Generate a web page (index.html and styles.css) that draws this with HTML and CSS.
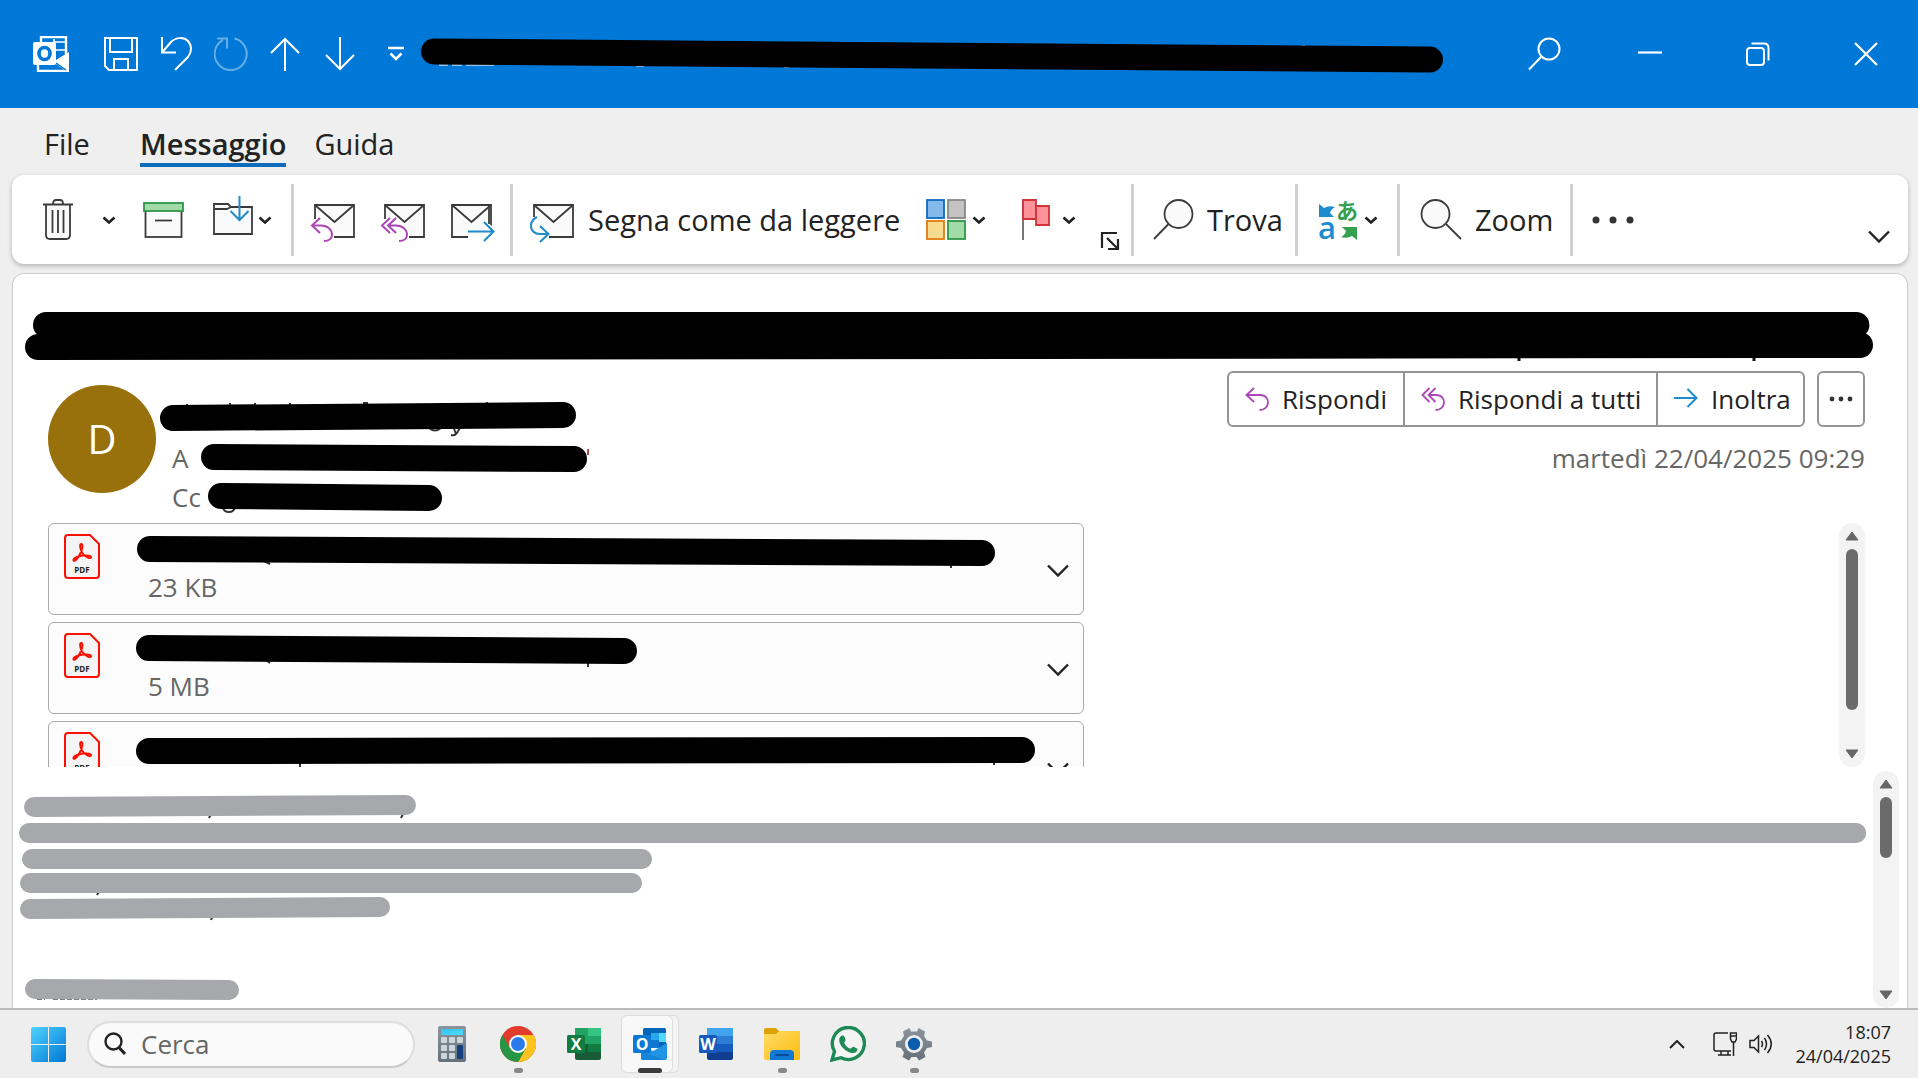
FILE: index.html
```html
<!DOCTYPE html>
<html lang="it">
<head>
<meta charset="utf-8">
<title>Messaggio</title>
<link rel="stylesheet" href="styles.css">
</head>
<body>
<svg class="defs" width="0" height="0" aria-hidden="true">
  <defs>
    <symbol id="chev" viewBox="0 0 14 8"><path d="M1.500 1.500 7 6.500 12.500 1.500" fill="none" stroke="#222" stroke-width="2.600"/></symbol>
    <symbol id="chev-lg" viewBox="0 0 22 13"><path d="M1 1.500 11 11.500 21 1.500" fill="none" stroke="#222" stroke-width="2.400"/></symbol>
    <symbol id="envelope" viewBox="0 0 41 34"><path d="M1 1H40V33H1Z" fill="#fafafa" stroke="#3b3b3b" stroke-width="1.800"/><path d="M1 1 20.500 18 40 1" fill="none" stroke="#3b3b3b" stroke-width="1.800"/></symbol>
    <symbol id="reply" viewBox="0 0 24 24"><path d="M9 1 1.500 8 9 15M1.500 8H15C21 8 23 12 23 15.500 23 20 19.500 23 14.500 23" fill="none" stroke="#ab47b5" stroke-width="1.800"/></symbol>
    <symbol id="reply-all" viewBox="0 0 24 24"><path d="M8.500 1 1.500 8 8.500 15M14.500 1 7.500 8 14.500 15M7.500 8H15C21 8 23 12 23 15.500 23 20 19.500 23 14.500 23" fill="none" stroke="#ab47b5" stroke-width="1.800"/></symbol>
    <symbol id="pdf" viewBox="0 0 36 45">
      <path d="M4 1H26L35 10V41Q35 44 32 44H4Q1 44 1 41V4Q1 1 4 1Z" fill="#f4f4f4" stroke="#fa0f00" stroke-width="2"/>
      <path d="M17 10C19.500 10 18.500 15 16.500 19 14.500 23.500 11 28 9.500 26.500 8.500 24.500 14 22 19 21.500 24 21 27.500 22 27 23.500 26 25.500 20.500 22.500 18 18.500 16 15 15.500 10 17 10Z" fill="none" stroke="#fa0f00" stroke-width="1.900"/>
      <text x="18" y="39" text-anchor="middle" font-size="8" font-weight="700" fill="#222">PDF</text>
    </symbol>
    <linearGradient id="g-win" x2="1" y2="1"><stop stop-color="#4fd3ff"/><stop offset="1" stop-color="#0078d4"/></linearGradient>
    <linearGradient id="g-folder" x2="1" y2="1"><stop stop-color="#ffdb66"/><stop offset="1" stop-color="#fcbc10"/></linearGradient>
    <linearGradient id="g-grey" x2="0" y2="1"><stop stop-color="#8b949b"/><stop offset="1" stop-color="#66717b"/></linearGradient>
    <linearGradient id="g-cyan" x2="1" y2="1"><stop stop-color="#35bdf5"/><stop offset="1" stop-color="#50e0ff"/></linearGradient>
  </defs>
</svg>

<header class="titlebar">
  <svg class="app-icon" width="36" height="36" viewBox="0 0 36 36" aria-hidden="true">
    <path d="M8 8V1H33V24" fill="none" stroke="#fff" stroke-width="2.400"/>
    <path d="M21 3V18M21 6H33M22 14H33" stroke="#fff" stroke-width="1.600"/>
    <path d="M5 29V35H35V18L22 26 34 34" fill="none" stroke="#fff" stroke-width="2.400"/>
    <path d="M35 17V35L22 26Z" fill="#fff"/><path d="M23 27 33 34" stroke="#0078d7" stroke-width="1.500"/>
    <rect y="6" width="23" height="23" rx="2" fill="#fff"/>
    <ellipse cx="11.500" cy="17.500" rx="5.500" ry="6" fill="none" stroke="#0078d7" stroke-width="3.600"/>
  </svg>
  <div class="quick">
    <button class="qbtn" aria-label="Salva"><svg width="34" height="34" viewBox="0 0 34 34"><path d="M1 1H33V33H5L1 29ZM6 1V15H28V1M10 33V22H24V33" /></svg></button>
    <button class="qbtn" aria-label="Annulla"><svg width="34" height="34" viewBox="0 0 34 34"><path d="M3 0V15.500H17M3 15.500 12 5C17 0 25 0 29 4 33 8.500 33 15 29 20L16 33"/></svg></button>
    <button class="qbtn dim" aria-label="Ripeti"><svg width="34" height="34" viewBox="0 0 34 34"><path d="M20.500 1.500A16 16 0 1 1 9 3M3 1.500H13V11.500" /></svg></button>
    <button class="qbtn" aria-label="Elemento precedente"><svg width="34" height="34" viewBox="0 0 34 34"><path d="M16 34V2M2 16 16 2 30 16"/></svg></button>
    <button class="qbtn" aria-label="Elemento successivo"><svg width="34" height="34" viewBox="0 0 34 34"><path d="M16 0V32M2 18 16 32 30 18"/></svg></button>
    <button class="qbtn" aria-label="Personalizza"><svg width="16" height="16" viewBox="0 0 16 16"><path d="M0 2H16M2.500 7.500 8 13 13.500 7.500" stroke-width="2.500"/></svg></button>
  </div>
  <div class="window-title">
    <svg class="redact" height="108" aria-hidden="true">
      <path d="M5 65H14M18 65H28M32 65H60M202 66H210M350 67H355M868 46H871M800 47H803" stroke="#9cc4ea" stroke-width="2" stroke-linecap="butt"/>
      <line x1="0" y1="51.500" x2="100%" y2="59.500"/>
    </svg>
  </div>
  <div class="window-controls">
    <button class="wbtn" aria-label="Cerca"><svg width="34" height="34" viewBox="0 0 34 34"><circle cx="22" cy="12" r="10.500"/><path d="M14.500 19.500 2 32.500"/></svg></button>
    <button class="wbtn" aria-label="Riduci a icona"><svg width="24" height="24" viewBox="0 0 24 24"><path d="M0 10.500H24" stroke-width="2.200"/></svg></button>
    <button class="wbtn" aria-label="Ripristina"><svg width="24" height="24" viewBox="0 0 24 24"><rect x="1" y="6" width="17" height="17" rx="3"/><path d="M5.500 1.500H18Q22.500 1.500 22.500 6V18.500"/></svg></button>
    <button class="wbtn" aria-label="Chiudi"><svg width="24" height="24" viewBox="0 0 24 24"><path d="M1 1 23 23M23 1 1 23" stroke-width="2.200"/></svg></button>
  </div>
</header>

<nav class="tabs">
  <a class="tab tab-file" href="#file">File</a>
  <a class="tab tab-active" href="#messaggio">Messaggio</a>
  <a class="tab" href="#guida">Guida</a>
</nav>

<div class="ribbon">
  <div class="group g-delete">
    <button class="rbtn b-trash" aria-label="Elimina"><svg width="30" height="41" viewBox="0 0 30 41"><path d="M3 6V36Q3 40 7 40H23Q27 40 27 36V6" fill="#fafafa"/><path d="M0 5.500H30M10 5Q10 1 13 1H17Q20 1 20 5M9.500 11V34M15 11V34M20.500 11V34" fill="none"/></svg></button>
    <button class="rbtn b-chev" aria-label="Altre opzioni di eliminazione"><svg width="14" height="8"><use href="#chev"/></svg></button>
    <button class="rbtn b-archive" aria-label="Archivia"><svg width="42" height="36" viewBox="0 0 42 36"><rect x="2.500" y="8" width="36" height="27" fill="#fafafa"/><rect x="1" y="1" width="39" height="8" fill="#a1dba8" stroke="#2f9548"/><path d="M12 18.500H29"/></svg></button>
    <button class="rbtn b-move" aria-label="Sposta"><svg width="41" height="40" viewBox="0 0 41 40"><path d="M1 8H15L18 11H39V38H1ZM1 13H14L18 11" fill="#fafafa"/><path d="M26.500 0V23M17.500 15 26.500 24 35.500 15" fill="none" stroke="#1e8bcd" stroke-width="2"/></svg><svg width="14" height="8"><use href="#chev"/></svg></button>
  </div>
  <div class="group g-reply">
    <button class="rbtn b-mail" aria-label="Rispondi"><svg width="44" height="38" viewBox="0 0 44 38"><use href="#envelope" x="3" y="0" width="41" height="34"/><path class="cut" d="M0 15H12V19Q21 21 23 30V38H0Z"/><path d="M9 14 1 21.500 9 29M1 21.500H10C17 21.500 21 26 21 31 21 34.500 18 37 13 37" fill="none" stroke="#ab47b5" stroke-width="2"/></svg></button>
    <button class="rbtn b-mail" aria-label="Rispondi a tutti"><svg width="44" height="38" viewBox="0 0 44 38"><use href="#envelope" x="3" y="0" width="41" height="34"/><path class="cut" d="M0 15H16V19Q26 21 28 30V38H0Z"/><path d="M9 14 1 21.500 9 29M15 14 7 21.500 15 29M7 21.500H15C22 21.500 26 26 26 31 26 34.500 23 37 18 37" fill="none" stroke="#ab47b5" stroke-width="2"/></svg></button>
    <button class="rbtn b-mail" aria-label="Inoltra"><svg width="44" height="38" viewBox="0 0 44 38"><use href="#envelope" x="0" y="0" width="41" height="34"/><path class="cut" d="M17 31H32V16L44 24V38H17Z"/><path d="M38 1V20" /><path d="M17 27.500H42M33 18 42.500 27.500 33 37" fill="none" stroke="#1e8bcd" stroke-width="2"/></svg></button>
  </div>
  <div class="group g-tags">
    <button class="rbtn b-unread"><svg width="44" height="38" viewBox="0 0 44 38"><use href="#envelope" x="3" y="0" width="41" height="34"/><path class="cut" d="M0 13H8V22H19V38H0Z"/><path d="M7 13C3 15 1 18 1 22 1 27 5 30 10 30H18M10 22 18.500 30 10 38" fill="none" stroke="#1e8bcd" stroke-width="2"/></svg><span>Segna come da leggere</span></button>
    <button class="rbtn b-cat" aria-label="Classifica"><svg width="40" height="41" viewBox="0 0 40 41"><rect x="1" y="1" width="17" height="18" fill="#83b9eb" stroke="#0f6cbd"/><rect x="22" y="1" width="17" height="18" fill="#c4c3c1" stroke="#8a8886"/><rect x="1" y="22" width="17" height="18" fill="#f8db8f" stroke="#e07a10"/><rect x="22" y="22" width="17" height="18" fill="#a1dba8" stroke="#2f9548"/></svg><svg width="14" height="8"><use href="#chev"/></svg></button>
    <button class="rbtn b-flag" aria-label="Completa"><svg width="28" height="41" viewBox="0 0 28 41"><path d="M1 1V41" stroke="#666"/><path d="M1 1H14V20H1Z" fill="#ff9199" stroke="#d13438"/><path d="M14 7H27V26H14Z" fill="#ff9199" stroke="#d13438"/></svg><svg width="14" height="8"><use href="#chev"/></svg></button>
    <button class="rbtn b-launch" aria-label="Altre opzioni"><svg width="18" height="18" viewBox="0 0 18 18"><path d="M1 16V1H16M6 6 16 16M17 7V17H7" fill="none" stroke="#222" stroke-width="2.200"/></svg></button>
  </div>
  <div class="group g-find">
    <button class="rbtn b-text"><svg width="41" height="41" viewBox="0 0 41 41"><circle cx="25.500" cy="15" r="14" fill="#fafafa"/><path d="M15.500 25 1 40" /></svg><span>Trova</span></button>
  </div>
  <div class="group g-lang">
    <button class="rbtn b-lang" aria-label="Traduci"><svg width="40" height="42" viewBox="0 0 40 42"><path d="M1 5 6 9Q11 6 17 8 13 10 12 14L16 18H1Z" class="blue"/><path d="M39 41 34 37Q29 40 23 38 27 36 28 32L24 28H39Z" class="green"/><text class="lang-a" x="0" y="40">a</text><text class="lang-jp" x="18" y="20">あ</text></svg><svg width="14" height="8"><use href="#chev"/></svg></button>
  </div>
  <div class="group g-zoom">
    <button class="rbtn b-text"><svg width="42" height="41" viewBox="0 0 42 41"><circle cx="15.500" cy="15" r="14" fill="#fafafa"/><path d="M26 25 41 40" /></svg><span>Zoom</span></button>
  </div>
  <button class="rbtn b-more" aria-label="Altri comandi"><svg width="42" height="8" viewBox="0 0 42 8"><g fill="#333" stroke="none"><circle cx="4" cy="4" r="3.500"/><circle cx="21" cy="4" r="3.500"/><circle cx="38" cy="4" r="3.500"/></g></svg></button>
  <button class="rbtn b-collapse" aria-label="Opzioni barra multifunzione"><svg width="22" height="13"><use href="#chev-lg"/></svg></button>
</div>

<main class="panel">
  <div class="subject">
    <svg class="redact" height="48" aria-hidden="true">
      <rect x="81.200%" y="42" width="3" height="7" class="bit"/><rect x="94.100%" y="42" width="3" height="7" class="bit"/>
      <line x1="8" y1="13" x2="99.800%" y2="13"/><line x1="0" y1="35" x2="100%" y2="33"/>
    </svg>
  </div>

  <section class="head">
    <div class="avatar">D</div>
    <div class="people">
      <div class="person"><svg class="redact" width="417" height="39" aria-hidden="true"><path class="tick" d="M15 4V10M83 3V8M118 3V8M58 3V8M191 3H196M315 2V6M257 28Q263 33 269 28M281 26 284 34M289 26 285 33Q283 36 279 35"/><line x1="1" y1="18" x2="391" y2="15"/></svg></div>
      <div class="person"><span>A</span><svg class="redact" width="390" height="39" aria-hidden="true"><path d="M380 10V16" stroke="#b3474a" stroke-width="2"/><line x1="6" y1="18" x2="366" y2="20"/></svg></div>
      <div class="person"><span>Cc</span><svg class="redact" width="240" height="39" aria-hidden="true"><path class="tick" d="M2 30Q3 34 8 34 13 34 14 29"/><line x1="0" y1="18" x2="208" y2="20"/></svg></div>
    </div>
    <div class="actions">
      <div class="action-row">
        <div class="action-group">
          <button class="abtn a-reply"><svg width="24" height="24"><use href="#reply"/></svg>Rispondi</button>
          <button class="abtn a-all"><svg width="24" height="24"><use href="#reply-all"/></svg>Rispondi a tutti</button>
          <button class="abtn a-fwd"><svg width="24" height="24" viewBox="0 0 24 24"><path d="M0 11H22M13.500 2 22.500 11 13.500 20" fill="none" stroke="#1e8bcd" stroke-width="2"/></svg>Inoltra</button>
        </div>
        <button class="abtn a-more" aria-label="Altre azioni"><svg width="24" height="6" viewBox="0 0 24 6" fill="#333"><circle cx="3" cy="3" r="2.400"/><circle cx="12" cy="3" r="2.400"/><circle cx="21" cy="3" r="2.400"/></svg></button>
      </div>
      <time class="date">martedì 22/04/2025 09:29</time>
    </div>
  </section>

  <section class="attachments">
    <div class="files">
      <article class="file">
        <svg class="pdf" width="36" height="45"><use href="#pdf"/></svg>
        <div class="file-info"><svg class="redact" height="32" aria-hidden="true"><path class="tick" d="M114 25 120 28M801 28V32"/><line x1="0" y1="13" x2="832" y2="17"/></svg><span>23 KB</span></div>
        <button class="file-menu" aria-label="Opzioni allegato"><svg width="22" height="13"><use href="#chev-lg"/></svg></button>
      </article>
      <article class="file">
        <svg class="pdf" width="36" height="45"><use href="#pdf"/></svg>
        <div class="file-info"><svg class="redact" height="32" aria-hidden="true"><path class="tick" d="M114 24 120 28M438 26V32"/><line x1="-1" y1="13" x2="474" y2="16"/></svg><span>5 MB</span></div>
        <button class="file-menu" aria-label="Opzioni allegato"><svg width="22" height="13"><use href="#chev-lg"/></svg></button>
      </article>
      <article class="file">
        <svg class="pdf" width="36" height="45"><use href="#pdf"/></svg>
        <div class="file-info"><svg class="redact" height="32" aria-hidden="true"><path class="tick" d="M150 24V33M844 24V31"/><line x1="-1" y1="17" x2="872" y2="16"/></svg></div>
        <button class="file-menu" aria-label="Opzioni allegato"><svg width="22" height="13"><use href="#chev-lg"/></svg></button>
      </article>
    </div>
    <div class="scroll" aria-hidden="true">
      <svg width="14" height="10" viewBox="0 0 14 10"><path d="M7 1 13 9H1Z"/></svg>
      <div class="thumb thumb-files"></div>
      <svg class="down" width="14" height="10" viewBox="0 0 14 10"><path d="M7 9 13 1H1Z"/></svg>
    </div>
  </section>

  <section class="mail">
    <div class="mail-text" aria-hidden="true">
      <svg class="redact grey" height="26"><path class="tick" d="M198 20 196 24M391 18 388 24"/><line x1="21" y1="13" x2="393" y2="11"/></svg>
      <svg class="redact grey" height="26"><line x1="16" y1="13" x2="99.100%" y2="13"/></svg>
      <svg class="redact grey" height="26"><line x1="19" y1="13" x2="629" y2="13"/></svg>
      <svg class="redact grey" height="26"><path class="tick" d="M87 18 84 23"/><line x1="17" y1="11" x2="619" y2="11"/></svg>
      <svg class="redact grey" height="26"><path class="tick" d="M200 17 198 22"/><line x1="17" y1="11" x2="367" y2="9"/></svg>
      <svg class="redact grey signoff" height="26"><path class="tick faint" d="M24 23H32M40 23H84" stroke-dasharray="5 2"/><line x1="22" y1="13" x2="216" y2="14"/></svg>
    </div>
    <div class="scroll" aria-hidden="true">
      <svg width="14" height="10" viewBox="0 0 14 10"><path d="M7 1 13 9H1Z"/></svg>
      <div class="thumb thumb-mail"></div>
      <svg class="down" width="14" height="10" viewBox="0 0 14 10"><path d="M7 9 13 1H1Z"/></svg>
    </div>
  </section>
</main>

<footer class="taskbar">
  <button class="start" aria-label="Start"><svg width="35" height="35" viewBox="0 0 35 35"><path d="M2 0H17V17H0V2Q0 0 2 0ZM18 0H33Q35 0 35 2V17H18ZM0 18H17V35H2Q0 35 0 33ZM18 18H35V33Q35 35 33 35H18Z" fill="url(#g-win)"/></svg></button>
  <label class="search"><svg width="22" height="24" viewBox="0 0 22 24"><circle cx="9.500" cy="9.500" r="8" fill="none" stroke="#222" stroke-width="2.400"/><path d="M15 15.500 21 22" stroke="#222" stroke-width="3"/></svg><input type="text" placeholder="Cerca" aria-label="Cerca"></label>
  <div class="apps">
    <button class="app" aria-label="Calcolatrice"><svg width="36" height="36" viewBox="0 0 36 36"><rect x="4" width="28" height="36" rx="2" fill="url(#g-grey)"/><rect x="7" y="3" width="22" height="6" fill="url(#g-cyan)"/><g fill="#cdd5dc"><rect x="7" y="11" width="6" height="6" rx="1"/><rect x="15" y="11" width="6" height="6" rx="1"/><rect x="23" y="11" width="6" height="6" rx="1"/><rect x="7" y="19" width="6" height="6" rx="1"/><rect x="15" y="19" width="6" height="6" rx="1"/><rect x="7" y="27" width="6" height="6" rx="1"/><rect x="15" y="27" width="6" height="6" rx="1"/></g><rect x="23" y="19" width="6" height="14" rx="1" fill="#13417e"/></svg></button>
    <button class="app running" aria-label="Chrome"><svg width="36" height="36" viewBox="0 0 36 36"><circle cx="18" cy="18" r="18" fill="#e33b2e"/><path d="M18 9H33.600A18 18 0 0 1 18 36L25.800 22.500Z" fill="#fcc31e"/><path d="M2.400 9A18 18 0 0 0 18 36L25.800 22.500 18 18 10.200 22.500Z" fill="#249645"/><circle cx="18" cy="18" r="9" fill="#fff"/><circle cx="18" cy="18" r="7" fill="#2a7bee"/></svg></button>
    <button class="app" aria-label="Excel"><svg width="36" height="36" viewBox="0 0 36 36"><rect x="9" y="2" width="26" height="32" rx="2" fill="#185c37"/><rect x="9" y="2" width="13" height="16" fill="#21a366"/><rect x="22" y="2" width="13" height="8" fill="#33c481"/><rect x="22" y="10" width="13" height="8" fill="#21a366"/><rect x="22" y="18" width="13" height="8" fill="#107c41"/><rect x="1" y="9" width="18" height="18" rx="1.500" fill="#107c41"/><text class="glyph" x="10" y="24">X</text></svg></button>
    <button class="app current running" aria-label="Outlook"><svg width="36" height="36" viewBox="0 0 36 36"><rect x="11" y="2" width="23" height="20" rx="1.500" fill="#0364b8"/><rect x="19" y="7" width="8" height="7" fill="#28a8ea"/><rect x="27" y="7" width="7" height="9" fill="#50d9ff"/><rect x="19" y="14" width="8" height="8" fill="#0f78d0"/><path d="M9 16 22 26 35 17V32Q35 34 33 34H11Q9 34 9 32Z" fill="#28a8ea"/><path d="M9 24 34 34H11Q9 34 9 32Z" fill="#1784d9"/><path d="M35 17 16 28 33 34 35 32Z" fill="#2195e4"/><rect x="1" y="9" width="18" height="18" rx="1.500" fill="#0f78d4"/><text class="glyph" x="10" y="24">O</text></svg></button>
    <button class="app" aria-label="Word"><svg width="36" height="36" viewBox="0 0 36 36"><rect x="9" y="2" width="26" height="32" rx="2" fill="#103f91"/><rect x="9" y="2" width="26" height="8" fill="#41a5ee"/><rect x="9" y="10" width="26" height="8" fill="#2b7cd3"/><rect x="9" y="18" width="26" height="8" fill="#185abd"/><rect x="1" y="9" width="18" height="18" rx="1.500" fill="#185abd"/><text class="glyph" x="10" y="24">W</text></svg></button>
    <button class="app running" aria-label="Esplora file"><svg width="36" height="36" viewBox="0 0 36 36"><path d="M0 4Q0 2 2 2H12L15 5H34Q36 5 36 7V10H0Z" fill="#dfa205"/><path d="M0 8H12L15 5H34Q36 5 36 7V32Q36 34 34 34H2Q0 34 0 32Z" fill="url(#g-folder)"/><path d="M6 34V28Q6 24 10 24H26Q30 24 30 28V34Z" fill="#0f78d4"/><rect x="11" y="28" width="14" height="2" rx="1" fill="#0a4a94"/></svg></button>
    <button class="app" aria-label="WhatsApp"><svg width="36" height="36" viewBox="0 0 36 36"><path d="M2 34 4.500 25.500A16 16 0 1 1 11 31.700Z" fill="#f4f4f4" stroke="#1d8a56" stroke-width="3.400"/><path d="M12 9.500C14 9 14.500 10.500 15.500 13.500 16 15 14 16 14.200 17 15.500 20 18 22 20.500 22.800 21.500 22.500 22.500 20.500 23.500 20.800L27.500 22.800C27.500 26 25 27.500 22 27 15.500 26 9.500 19.500 9.200 14.500 9 12 10.500 10 12 9.500Z" fill="#1d8a56"/></svg></button>
    <button class="app running" aria-label="Impostazioni"><svg width="36" height="36" viewBox="0 0 36 36"><path d="M13.500 2 15 5.500H21L22.500 2 29 5.500 28 10 31 14.500 36 15.500V21L31 22 28 26.500 29.500 31 23 34.500 20.500 31H15.500L13 34.500 6.500 31 8 26.500 5 22 0 21V15.500L5 14.500 8 10 7 5.500Z" fill="url(#g-grey)"/><circle cx="18" cy="18" r="9" fill="#eee"/><circle cx="18" cy="18" r="6.200" fill="#0b5cad"/></svg></button>
  </div>
  <div class="tray">
    <button class="tray-btn" aria-label="Mostra icone nascoste"><svg width="16" height="9" viewBox="0 0 16 9"><path d="M1 8 8 1 15 8" fill="none" stroke="#222" stroke-width="2"/></svg></button>
    <svg class="net" width="24" height="24" viewBox="0 0 24 24" fill="none" stroke="#222" stroke-width="1.500"><path d="M15 1H3Q1 1 1 3V17Q1 19 3 19H18M8 19V23M15 19V23M5 23H18M20.500 10V24M17.500 1H23.500V7L22 10H19L17.500 7ZM17.500 4H23.500"/></svg>
    <svg width="24" height="20" viewBox="0 0 24 20" fill="none" stroke="#222" stroke-width="1.500"><path d="M1 6.500H5L9.500 2V18L5 13.500H1ZM12.500 7Q14.500 10 12.500 13M15.500 4Q19.500 10 15.500 16M18.500 1Q26 10 18.500 19"/></svg>
    <div class="clock"><span>18:07</span><span>24/04/2025</span></div>
  </div>
</footer>
</body>
</html>
```
FILE: styles.css
```css
* { box-sizing: border-box; }

html, body { height: 100%; }

body {
  margin: 0;
  display: flex;
  flex-direction: column;
  background: #efefef;
  color: #222;
  font: 26px/39px "Open Sans", "Noto Sans", sans-serif;
  overflow: hidden;
}

button {
  margin: 0;
  padding: 0;
  border: 0;
  background: none;
  color: inherit;
  font: inherit;
  display: flex;
  align-items: center;
  white-space: nowrap;
}

svg { display: block; flex: none; }
.defs { position: absolute; }

/* Redaction strokes */
.redact { overflow: visible; }
.redact line { stroke: #000; stroke-width: 26px; stroke-linecap: round; }
.redact.grey line { stroke: #a7a8ac; stroke-width: 20px; }
.tick { fill: none; stroke: #333; stroke-width: 2px; }
.tick.faint { stroke: #777; }
.bit { fill: #111; }

/* Title bar */
.titlebar {
  flex: none;
  display: flex;
  align-items: center;
  height: 108px;
  padding-left: 33px;
  background: #0078d7;
}
.titlebar button svg { fill: none; stroke: #fff; stroke-width: 2px; }
.quick { display: flex; margin-left: 24px; }
.qbtn { width: 55px; height: 108px; justify-content: center; }
.dim { opacity: .4; }
.window-title { flex: 1; min-width: 0; padding: 0 60px 0 11px; }
.window-title .redact { width: 100%; }
.window-controls { display: flex; }
.wbtn { width: 108px; height: 108px; padding-left: 4px; justify-content: center; }
.wbtn:first-child { width: 104px; }

/* Tabs */
.tabs {
  flex: none;
  display: flex;
  height: 67px;
  padding: 16px 0 0 44px;
  font-size: 29px;
}
.tab { height: 43px; color: #222; text-decoration: none; }
.tab-file { width: 96px; }
.tab-active { margin-right: 28px; font-weight: 600; border-bottom: 4px solid #0f6cbd; }

/* Ribbon */
.ribbon {
  flex: none;
  display: flex;
  align-items: center;
  height: 89px;
  margin: 0 10px 0 12px;
  background: #fff;
  border-radius: 12px;
  box-shadow: 0 2px 5px rgba(0, 0, 0, .25);
  font-size: 29px;
}
.group {
  flex: none;
  display: flex;
  height: 72px;
  border-right: 3px solid #d0d0d0;
}
.rbtn { height: 72px; }
.rbtn svg { stroke: #3b3b3b; stroke-width: 1.8px; overflow: visible; }
.rbtn use { stroke: none; }
.rbtn .cut { fill: #fff; stroke: none; }
.g-delete { width: 282px; padding-left: 16px; }
.b-trash { width: 59px; justify-content: center; }
.b-chev { width: 44px; justify-content: center; }
.b-archive { width: 66px; justify-content: center; }
.b-move { padding: 0 0 8px 16px; gap: 4px; }
.b-move svg + svg { margin-top: 8px; }
.g-reply { width: 219px; padding-left: 4px; }
.b-mail { width: 70px; justify-content: center; padding-top: 6px; }
.g-tags { width: 621px; padding-left: 17px; }
.b-unread { width: 396px; gap: 14px; }
.b-unread svg { margin-top: 6px; }
.b-cat { width: 96px; gap: 6px; }
.b-flag { width: 79px; gap: 12px; }
.b-launch { align-items: flex-end; padding-bottom: 6px; }
.g-find { width: 164px; padding-left: 19px; }
.g-lang { width: 102px; padding-left: 20px; }
.b-lang { gap: 6px; }
.g-zoom { width: 173px; padding-left: 20px; }
.b-text { gap: 13px; }
.blue { fill: #1e8bcd; stroke: none; }
.green { fill: #35a04e; stroke: none; }
.lang-a { font: 600 31px "Open Sans", sans-serif; fill: #1e8bcd; stroke: none; }
.lang-jp { font: 700 22px "Noto Sans CJK JP", sans-serif; fill: #35a04e; stroke: none; }
.b-more { padding-left: 19px; }
.b-collapse { margin-left: auto; padding: 0 18px 13px 0; align-items: flex-end; }

/* Message panel */
.panel {
  flex: 1;
  min-height: 0;
  display: flex;
  flex-direction: column;
  margin: 9px 10px 0 12px;
  background: #fff;
  border: 1px solid #ccc;
  border-bottom: 0;
  border-radius: 12px 12px 0 0;
}
.subject { padding: 38px 47px 0 25px; }
.subject .redact { width: 100%; }

.head {
  flex: none;
  display: flex;
  min-height: 163px;
  padding: 11px 42px 0 35px;
}
.avatar {
  width: 108px;
  height: 108px;
  margin-top: 14px;
  border-radius: 50%;
  background: #98700c;
  color: #fff;
  font-size: 40px;
  line-height: 108px;
  text-align: center;
}
.people { padding: 29px 0 0 16px; color: #666; }
.person { display: flex; height: 39px; }
.person span + .redact { margin-left: 20px; }
.actions { margin-left: auto; display: flex; flex-direction: column; align-items: flex-end; }
.action-row { display: flex; gap: 12px; }
.action-group { display: flex; border: 2px solid #949494; border-radius: 6px; }
.abtn { height: 52px; gap: 13px; padding-left: 16px; }
.abtn + .abtn { border-left: 2px solid #949494; }
.a-reply { width: 174px; }
.a-all { width: 253px; }
.a-fwd { width: 147px; }
.a-more {
  width: 48px;
  height: 56px;
  padding: 0;
  justify-content: center;
  border: 2px solid #949494;
  border-radius: 6px;
}
.date { margin-top: 12px; color: #666; }

/* Attachments */
.attachments {
  flex: none;
  display: flex;
  justify-content: space-between;
  height: 244px;
  padding: 0 42px 0 35px;
}
.files { width: 57%; display: flex; flex-direction: column; gap: 7px; overflow: hidden; }
.file {
  flex: none;
  display: flex;
  height: 92px;
  padding-left: 15px;
  background: #fcfcfc;
  border: 1px solid #aaa;
  border-radius: 6px;
}
.pdf { margin-top: 10px; }
.pdf, .glyph { font-family: "Open Sans", sans-serif; }
.file-info { flex: 1; min-width: 0; padding: 12px 0 0 50px; color: #666; }
.file-info span { display: block; margin-left: -2px; }
.file-info .redact { width: 100%; }
.file-menu { width: 54px; padding: 3px 0 0 18px; }

.scroll {
  flex: none;
  display: flex;
  flex-direction: column;
  align-items: center;
  width: 26px;
  padding: 8px 0;
  border-radius: 13px;
  background: #f3f3f3;
  fill: #666;
}
.scroll svg { stroke: #666; stroke-width: 1px; stroke-linejoin: round; }
.scroll .down { margin-top: auto; }
.thumb { width: 12px; margin-top: 8px; border-radius: 6px; background: #6b6b6b; }
.thumb-files { height: 161px; }
.thumb-mail { height: 61px; }

/* Message body */
.mail { flex: 1; min-height: 0; display: flex; padding: 4px 8px 0 0; }
.mail-text { flex: 1; min-width: 0; padding-top: 23px; }
.mail-text .redact { width: 100%; }
.signoff { margin-top: 52px; }

/* Taskbar */
.taskbar {
  flex: none;
  display: flex;
  align-items: center;
  height: 70px;
  padding: 0 27px 0 31px;
  background: #eee;
  border-top: 2px solid #bbb;
}
.search {
  display: flex;
  align-items: center;
  gap: 15px;
  width: 328px;
  height: 47px;
  margin-left: 21px;
  padding: 0 15px;
  background: #fafafa;
  border: 2px solid #ddd;
  border-bottom-color: #c8c8c8;
  border-radius: 24px;
}
.search input {
  min-width: 0;
  flex: 1;
  padding: 0;
  border: 0;
  background: none;
  font: inherit;
}
.search input::placeholder { color: #666; opacity: 1; }
.apps { display: flex; margin-left: 4px; }
.app { position: relative; width: 66px; height: 58px; justify-content: center; }
.app svg { position: relative; }
.current::before {
  content: "";
  position: absolute;
  inset: 0 10px 0 4px;
  background: #f8f8f8;
  border: 1px solid #ddd;
  border-radius: 6px;
  box-shadow: 6px 0 0 -1px #f4f4f4, 6px 0 0 #ddd;
}
.running::after {
  content: "";
  position: absolute;
  left: 50%;
  bottom: 0;
  width: 9px;
  height: 5px;
  margin-left: -4px;
  border-radius: 3px;
  background: #888;
}
.current::after { width: 24px; margin-left: -12px; background: #3c3c3c; }
.glyph { font-size: 16px; font-weight: 700; fill: #fff; text-anchor: middle; }
.tray { display: flex; align-items: center; margin-left: auto; }
.net { margin: 0 12px 0 28px; }
.clock {
  display: flex;
  flex-direction: column;
  align-items: flex-end;
  width: 118px;
  font-size: 18px;
  line-height: 24px;
}
```
